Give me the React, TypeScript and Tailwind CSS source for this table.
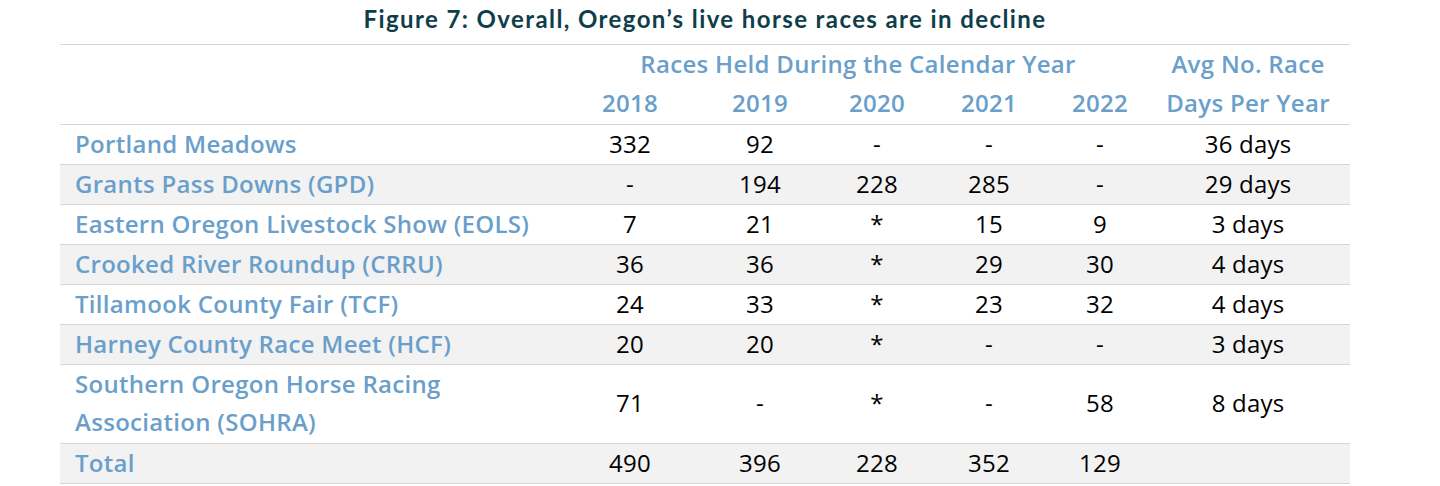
import React from "react";

const cols = "grid grid-cols-[510px_120px_140px_94px_130px_92px_204px]";

type Row = { label: string[]; vals: string[]; avg: string; gray: boolean; tall?: boolean };

const rows: Row[] = [
  { label: ["Portland Meadows"], vals: ["332", "92", "-", "-", "-"], avg: "36 days", gray: false },
  { label: ["Grants Pass Downs (GPD)"], vals: ["-", "194", "228", "285", "-"], avg: "29 days", gray: true },
  { label: ["Eastern Oregon Livestock Show (EOLS)"], vals: ["7", "21", "*", "15", "9"], avg: "3 days", gray: false },
  { label: ["Crooked River Roundup (CRRU)"], vals: ["36", "36", "*", "29", "30"], avg: "4 days", gray: true },
  { label: ["Tillamook County Fair (TCF)"], vals: ["24", "33", "*", "23", "32"], avg: "4 days", gray: false },
  { label: ["Harney County Race Meet (HCF)"], vals: ["20", "20", "*", "-", "-"], avg: "3 days", gray: true },
  {
    label: ["Southern Oregon Horse Racing", "Association (SOHRA)"],
    vals: ["71", "-", "*", "-", "58"],
    avg: "8 days",
    gray: false,
    tall: true,
  },
  { label: ["Total"], vals: ["490", "396", "228", "352", "129"], avg: "", gray: true },
];

const labelFont = "font-['Open_Sans',sans-serif] font-semibold text-[24px] tracking-[0.3px] text-[#6a9fcb]";
const headFont = "font-['Open_Sans',sans-serif] font-semibold text-[24px] tracking-[0.3px] text-[#6a9fcb]";
const numFont = "font-['Open_Sans',sans-serif] text-[24px] tracking-[0.2px] text-black";

export default function App() {
  return (
    <div className="w-[1440px] h-[486px] bg-white">
      <div className="mx-[60px] w-[1290px]">
        <div className="h-[44px] flex items-start justify-center pt-[4px]">
          <h1 className="font-['Lato',sans-serif] font-bold text-[24px] leading-[30px] text-[#0f3e4b] tracking-[1.4px]">
            Figure 7: Overall, Oregon’s live horse races are in decline
          </h1>
        </div>
        <div className="border-t border-[#d6d6d6]">
          <div className={`${cols} h-[80px] border-b border-[#d6d6d6] ${headFont}`}>
            <div className="row-span-2" />
            <div className="col-span-5 h-[40px] pb-[2px] flex items-center justify-center">
              Races Held During the Calendar Year
            </div>
            <div className="h-[40px] pb-[2px] flex items-center justify-center">Avg No. Race</div>
            {["2018", "2019", "2020", "2021", "2022"].map((y) => (
              <div key={y} className="h-[39px] pb-[3px] flex items-center justify-center">
                {y}
              </div>
            ))}
            <div className="h-[39px] pb-[3px] flex items-center justify-center">Days Per Year</div>
          </div>
          {rows.map((r, i) => (
            <div
              key={i}
              className={`${cols} ${r.tall ? "h-[79px]" : "h-[40px]"} border-b border-[#d6d6d6] ${
                r.gray ? "bg-[#f2f2f2]" : "bg-white"
              }`}
            >
              <div className={`pl-[15px] pb-[2px] flex flex-col justify-center leading-[38px] ${labelFont}`}>
                {r.label.map((l) => (
                  <span key={l}>{l}</span>
                ))}
              </div>
              {r.vals.map((v, j) => (
                <div key={j} className={`pb-[2px] flex items-center justify-center ${numFont}`}>
                  {v}
                </div>
              ))}
              <div className={`pb-[2px] flex items-center justify-center ${numFont}`}>{r.avg}</div>
            </div>
          ))}
        </div>
      </div>
    </div>
  );
}
